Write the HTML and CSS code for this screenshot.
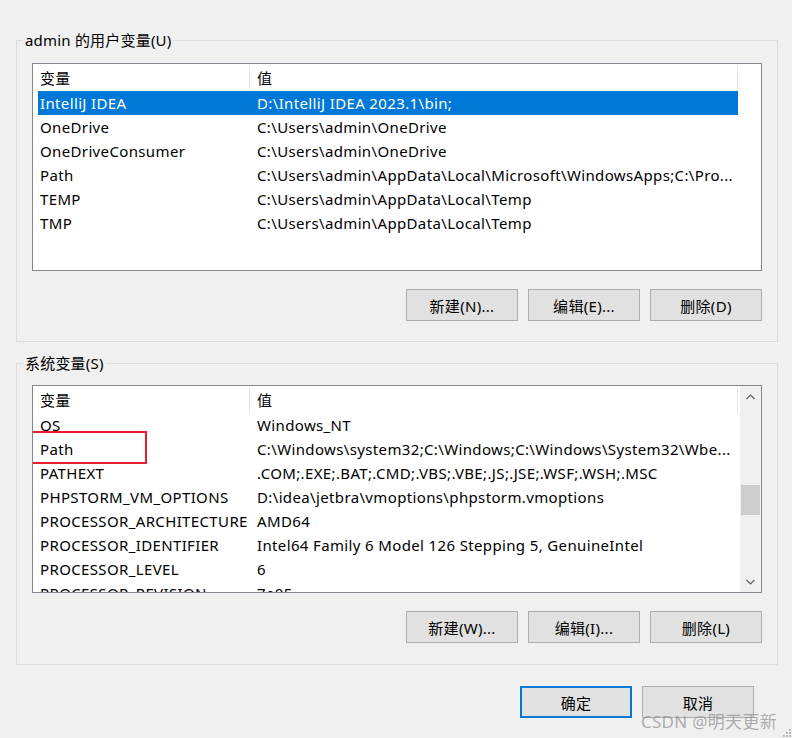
FILE: index.html
```html
<!DOCTYPE html>
<html lang="zh-CN">
<head>
  <meta charset="UTF-8">
  <title>环境变量</title>
  <link rel="stylesheet" href="styles.css">
</head>
<body>

<div class="dialog">

  <!-- 用户变量 -->
  <fieldset class="group user">
    <legend>admin 的用户变量(U)</legend>
    <div class="list">
      <div class="list-body">
        <div class="list-head">
          <div class="cell">变量</div>
          <div class="cell">值</div>
        </div>
        <div class="row selected"><div class="cell">IntelliJ IDEA</div><div class="cell">D:\IntelliJ IDEA 2023.1\bin;</div></div>
        <div class="row"><div class="cell">OneDrive</div><div class="cell">C:\Users\admin\OneDrive</div></div>
        <div class="row"><div class="cell">OneDriveConsumer</div><div class="cell">C:\Users\admin\OneDrive</div></div>
        <div class="row"><div class="cell">Path</div><div class="cell">C:\Users\admin\AppData\Local\Microsoft\WindowsApps;C:\Pro...</div></div>
        <div class="row"><div class="cell">TEMP</div><div class="cell">C:\Users\admin\AppData\Local\Temp</div></div>
        <div class="row"><div class="cell">TMP</div><div class="cell">C:\Users\admin\AppData\Local\Temp</div></div>
      </div>
    </div>
    <div class="buttons">
      <button class="btn">新建(N)...</button>
      <button class="btn">编辑(E)...</button>
      <button class="btn">删除(D)</button>
    </div>
  </fieldset>

  <!-- 系统变量 -->
  <fieldset class="group system">
    <legend>系统变量(S)</legend>
    <div class="list">
      <div class="list-body">
        <div class="list-head">
          <div class="cell">变量</div>
          <div class="cell">值</div>
        </div>
        <div class="row"><div class="cell">OS</div><div class="cell">Windows_NT</div></div>
        <div class="row marked"><div class="cell">Path</div><div class="cell">C:\Windows\system32;C:\Windows;C:\Windows\System32\Wbe...</div></div>
        <div class="row"><div class="cell">PATHEXT</div><div class="cell">.COM;.EXE;.BAT;.CMD;.VBS;.VBE;.JS;.JSE;.WSF;.WSH;.MSC</div></div>
        <div class="row"><div class="cell">PHPSTORM_VM_OPTIONS</div><div class="cell">D:\idea\jetbra\vmoptions\phpstorm.vmoptions</div></div>
        <div class="row"><div class="cell">PROCESSOR_ARCHITECTURE</div><div class="cell">AMD64</div></div>
        <div class="row"><div class="cell">PROCESSOR_IDENTIFIER</div><div class="cell">Intel64 Family 6 Model 126 Stepping 5, GenuineIntel</div></div>
        <div class="row"><div class="cell">PROCESSOR_LEVEL</div><div class="cell">6</div></div>
        <div class="row"><div class="cell">PROCESSOR_REVISION</div><div class="cell">7e05</div></div>
      </div>
      <div class="scrollbar">
        <div class="arrow">
          <svg width="9" height="6" viewBox="0 0 9 6"><polyline points="0.5,5 4.5,1 8.5,5" fill="none" stroke="#606060" stroke-width="1.2"/></svg>
        </div>
        <div class="track"><div class="thumb"></div></div>
        <div class="arrow">
          <svg width="9" height="6" viewBox="0 0 9 6"><polyline points="0.5,1 4.5,5 8.5,1" fill="none" stroke="#606060" stroke-width="1.2"/></svg>
        </div>
      </div>
    </div>
    <div class="buttons">
      <button class="btn">新建(W)...</button>
      <button class="btn">编辑(I)...</button>
      <button class="btn">删除(L)</button>
    </div>
  </fieldset>

  <div class="buttons footer">
    <button class="btn default">确定</button>
    <button class="btn">取消</button>
  </div>

  <div class="watermark">CSDN @明天更新</div>
  <svg class="grip" width="10" height="10" viewBox="0 0 10 10">
    <rect x="7" y="1" width="2" height="2" fill="#b8b8b8"/>
    <rect x="4" y="4" width="2" height="2" fill="#b8b8b8"/>
    <rect x="7" y="4" width="2" height="2" fill="#b8b8b8"/>
    <rect x="1" y="7" width="2" height="2" fill="#b8b8b8"/>
    <rect x="4" y="7" width="2" height="2" fill="#b8b8b8"/>
    <rect x="7" y="7" width="2" height="2" fill="#b8b8b8"/>
  </svg>
</div>

</body>
</html>
```

FILE: styles.css
```css
html, body {
  margin: 0;
  height: 100%;
}
body {
  background-color: #f0f0f0;
  color: #000;
  font-family: "Noto Sans", "Noto Sans CJK SC", sans-serif;
  font-size: 15px;
  overflow: hidden;
}
.dialog {
  position: relative;
  width: 792px;
  height: 738px;
  padding-top: 30px;
  box-sizing: border-box;
}
.group {
  margin: 0 0 11px 16px;
  width: 762px;
  box-sizing: border-box;
  padding: 0 0 20px;
  border: 1px solid #dcdcdc;
  min-width: 0;
}
.group.system {
  padding-bottom: 21px;
}
.group legend {
  margin-left: 6px;
  padding: 0 2px;
  line-height: 20px;
  letter-spacing: 0.2px;
}
.list {
  display: flex;
  margin: 13px 15px 0;
  height: 208px;
  border: 1px solid #828790;
  background-color: #fff;
  box-sizing: border-box;
  overflow: hidden;
}
.group.system .list {
  margin-top: 12px;
}
.list-body {
  width: 700px;
  padding-left: 5px;
  flex-shrink: 0;
}
.list-head, .row {
  display: grid;
  grid-template-columns: 212px 488px;
  white-space: nowrap;
}
.list-head {
  height: 27px;
  align-items: center;
}
.list-head .cell {
  height: 24px;
  line-height: 24px;
  border-right: 1px solid #e5e5e5;
  box-sizing: border-box;
}
.row {
  height: 24px;
  line-height: 24px;
}
.cell {
  overflow: hidden;
  padding-left: 2px;
  letter-spacing: 0.36px;
}
.cell + .cell {
  padding-left: 7px;
}
.row.selected {
  background-color: #0078d7;
  color: #fff;
}
.row.marked .cell:first-child {
  position: relative;
  overflow: visible;
}
.row.marked .cell:first-child::after {
  content: "";
  position: absolute;
  left: -7px;
  top: -6px;
  width: 116px;
  height: 33px;
  border: 2px solid #e81f2a;
  box-sizing: border-box;
}
.scrollbar {
  width: 21px;
  margin-left: auto;
  background-color: #f0f0f0;
  display: flex;
  flex-direction: column;
}
.arrow {
  height: 21px;
  display: flex;
  align-items: center;
  justify-content: center;
}
.track {
  flex: 1;
  padding-top: 78px;
}
.thumb {
  margin: 0 1px;
  height: 30px;
  background-color: #cdcdcd;
}
.buttons {
  display: flex;
  justify-content: flex-end;
  gap: 10px;
  margin: 18px 15px 0;
}
.btn {
  width: 112px;
  height: 32px;
  padding: 0;
  border: 1px solid #adadad;
  background-color: #e1e1e1;
  font-family: inherit;
  font-size: 15px;
  letter-spacing: 0.3px;
  color: #000;
}
.btn.default {
  border: 2px solid #0078d7;
}
.footer {
  margin: 21px 38px 0 0;
}
.watermark {
  position: absolute;
  right: 15px;
  bottom: 5px;
  font-size: 17px;
  color: rgba(140, 140, 140, 0.7);
  letter-spacing: 0.3px;
}
.grip {
  position: absolute;
  right: 0;
  bottom: 0;
}
```
